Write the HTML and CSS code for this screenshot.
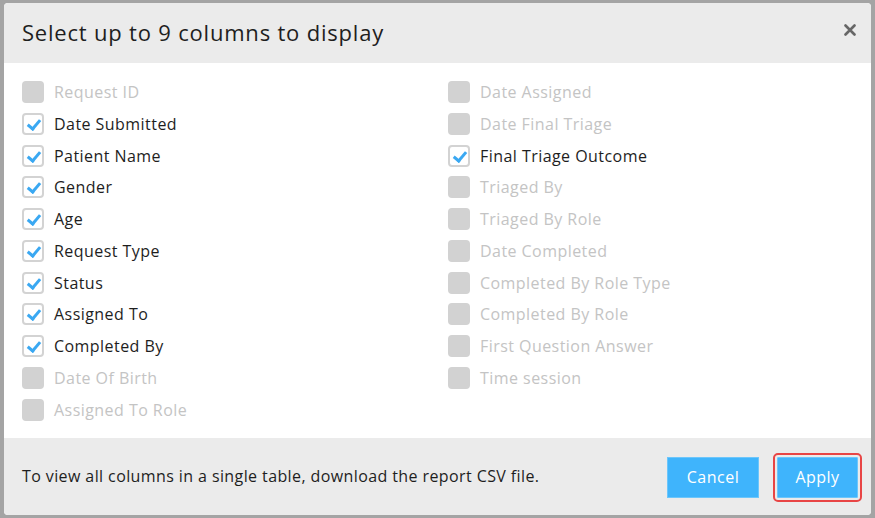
FILE: index.html
```html
<!DOCTYPE html>
<html lang="en">
<head>
    <meta charset="UTF-8">
    <title>Select columns</title>
    <link rel="stylesheet" href="styles.css">
</head>
<body>
    <div class="modal">
        <div class="modal-header">
            <h2>Select up to 9 columns to display</h2>
            <button class="close-btn" aria-label="Close">
                <svg viewBox="0 0 12 12" width="12" height="12"><path d="M1.5 1.5 L10.5 10.5 M10.5 1.5 L1.5 10.5" stroke="#666" stroke-width="2.6" stroke-linecap="round"/></svg>
            </button>
        </div>

        <div class="modal-body">
            <ul class="col-list">
                <li class="disabled"><span class="box"></span>Request ID</li>
                <li class="checked"><span class="box"></span>Date Submitted</li>
                <li class="checked"><span class="box"></span>Patient Name</li>
                <li class="checked"><span class="box"></span>Gender</li>
                <li class="checked"><span class="box"></span>Age</li>
                <li class="checked"><span class="box"></span>Request Type</li>
                <li class="checked"><span class="box"></span>Status</li>
                <li class="checked"><span class="box"></span>Assigned To</li>
                <li class="checked"><span class="box"></span>Completed By</li>
                <li class="disabled"><span class="box"></span>Date Of Birth</li>
                <li class="disabled"><span class="box"></span>Assigned To Role</li>
            </ul>
            <ul class="col-list">
                <li class="disabled"><span class="box"></span>Date Assigned</li>
                <li class="disabled"><span class="box"></span>Date Final Triage</li>
                <li class="checked"><span class="box"></span>Final Triage Outcome</li>
                <li class="disabled"><span class="box"></span>Triaged By</li>
                <li class="disabled"><span class="box"></span>Triaged By Role</li>
                <li class="disabled"><span class="box"></span>Date Completed</li>
                <li class="disabled"><span class="box"></span>Completed By Role Type</li>
                <li class="disabled"><span class="box"></span>Completed By Role</li>
                <li class="disabled"><span class="box"></span>First Question Answer</li>
                <li class="disabled"><span class="box"></span>Time session</li>
            </ul>
        </div>

        <div class="modal-footer">
            <p>To view all columns in a single table, download the report CSV file.</p>
            <div class="actions">
                <button class="btn btn-cancel">Cancel</button>
                <button class="btn btn-apply">Apply</button>
            </div>
        </div>
    </div>
</body>
</html>
```

FILE: styles.css
```css
* {
    margin: 0;
    padding: 0;
    box-sizing: border-box;
}

body {
    background-color: #a4a4a4;
    font-family: "Open Sans", "DejaVu Sans", sans-serif;
    color: #1e1e1e;
    padding: 3px 4px;
}

.modal {
    width: 867px;
    height: 512px;
    background-color: #fff;
    border-radius: 4px;
    display: flex;
    flex-direction: column;
    overflow: hidden;
}

.modal-header {
    height: 60px;
    background-color: #ebebeb;
    display: flex;
    align-items: center;
    justify-content: space-between;
    padding: 0 11px 0 18px;
}

.modal-header h2 {
    font-size: 22px;
    font-weight: 400;
    letter-spacing: 0.8px;
    color: #1e1e1e;
    margin-top: -2px;
}

.close-btn {
    background: none;
    border: none;
    width: 20px;
    height: 20px;
    display: flex;
    align-items: center;
    justify-content: center;
    margin-top: -6px;
}

.modal-body {
    display: grid;
    grid-template-columns: 426px 1fr;
    padding: 18px 0 17px 18px;
}

.col-list {
    list-style: none;
    display: flex;
    flex-direction: column;
    gap: 9.75px;
}

.col-list li {
    display: flex;
    align-items: center;
    height: 22px;
    font-size: 16px;
    letter-spacing: 0.45px;
    gap: 10px;
}

.box {
    width: 22px;
    height: 22px;
    border-radius: 4px;
    flex-shrink: 0;
    position: relative;
}

.disabled {
    color: #c4c4c4;
}

.disabled .box {
    background-color: #d2d2d2;
}

.checked .box {
    border: 2px solid #d3d3d3;
    background-color: #fff;
}

.checked .box::after {
    content: "";
    position: absolute;
    left: 6px;
    top: 2px;
    width: 5px;
    height: 10px;
    border: solid #3aa8f2;
    border-width: 0 3px 3px 0;
    transform: rotate(40deg);
}

.modal-footer {
    flex: 1;
    background-color: #ebebeb;
    display: flex;
    align-items: center;
    justify-content: space-between;
    padding: 0 13px 0 18px;
}

.modal-footer p {
    font-size: 16px;
    letter-spacing: 0.4px;
    color: #1e1e1e;
}

.actions {
    display: flex;
    gap: 18px;
    margin-top: 2px;
}

.btn {
    background-color: #3fb4fc;
    color: #fff;
    border: 1px solid #6cc6fb;
    height: 41px;
    font-family: inherit;
    font-size: 16px;
    letter-spacing: 0.5px;
    cursor: pointer;
}

.btn-cancel {
    width: 92px;
}

.btn-apply {
    width: 81px;
    outline: 2px solid #e84545;
    outline-offset: 2px;
    border-radius: 1px;
}
```
